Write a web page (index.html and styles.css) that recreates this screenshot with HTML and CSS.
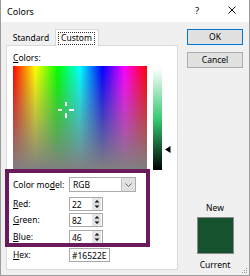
FILE: index.html
```html
<!DOCTYPE html>
<html>
<head>
<meta charset="utf-8">
<link rel="stylesheet" href="styles.css">
</head>
<body>
<div class="window">
  <div class="titlebar">
    <span class="title">Colors</span>
    <span class="help">?</span>
    <svg class="close" width="8" height="8" viewBox="0 0 8 8"><path d="M0.5 0.5 L7.5 7.5 M7.5 0.5 L0.5 7.5" stroke="#111" stroke-width="1"/></svg>
  </div>
  <div class="main">
    <div class="left">
      <div class="tabs">
        <div class="tab">Standard</div>
        <div class="tab active"><span class="focus">Custom</span></div>
      </div>
      <div class="panel">
        <div class="label top-label"><u>C</u>olors:</div>
        <div class="pickers">
          <div class="spectrum">
            <svg class="cross" width="17" height="17" viewBox="0 0 17 17">
              <rect x="0" y="7" width="4" height="2" fill="#fff"/>
              <rect x="11" y="7" width="5" height="2" fill="#fff"/>
              <rect x="7" y="0" width="2" height="4" fill="#fff"/>
              <rect x="7" y="11" width="2" height="5" fill="#fff"/>
            </svg>
          </div>
          <div class="lum"></div>
          <svg class="arrow" width="6" height="7" viewBox="0 0 6 7"><path d="M0 3.5 L5.5 0 L5.5 7 Z" fill="#000"/></svg>
        </div>
        <div class="form">
          <div class="label">Color mo<u>d</u>el:</div>
          <div class="select"><span class="val">RGB</span><span class="dd"><svg width="7" height="4" viewBox="0 0 7 4"><path d="M0.5 0.5 L3.5 3.5 L6.5 0.5" fill="none" stroke="#666" stroke-width="1"/></svg></span></div>
          <div class="label"><u>R</u>ed:</div>
          <div class="input spin"><span class="val">22</span><span class="spinbtn"><svg width="8" height="12" viewBox="0 0 8 12"><path d="M4 2 L6.5 4.5 L1.5 4.5 Z M4 10 L6.5 7.5 L1.5 7.5 Z" fill="#111"/><rect x="0" y="5.5" width="8" height="1" fill="#d0d0d0"/></svg></span></div>
          <div class="label"><u>G</u>reen:</div>
          <div class="input spin"><span class="val">82</span><span class="spinbtn"><svg width="8" height="12" viewBox="0 0 8 12"><path d="M4 2 L6.5 4.5 L1.5 4.5 Z M4 10 L6.5 7.5 L1.5 7.5 Z" fill="#111"/><rect x="0" y="5.5" width="8" height="1" fill="#d0d0d0"/></svg></span></div>
          <div class="label"><u>B</u>lue:</div>
          <div class="input spin"><span class="val">46</span><span class="spinbtn"><svg width="8" height="12" viewBox="0 0 8 12"><path d="M4 2 L6.5 4.5 L1.5 4.5 Z M4 10 L6.5 7.5 L1.5 7.5 Z" fill="#111"/><rect x="0" y="5.5" width="8" height="1" fill="#d0d0d0"/></svg></span></div>
          <div class="label"><u>H</u>ex:</div>
          <div class="input hex"><span class="val">#16522E</span></div>
        </div>
        <div class="highlight"></div>
      </div>
    </div>
    <div class="right">
      <div class="btn ok">OK</div>
      <div class="btn">Cancel</div>
      <div class="caption new">New</div>
      <div class="swatch"></div>
      <div class="caption current">Current</div>
    </div>
  </div>
  <svg class="grip" width="6" height="6" viewBox="0 0 6 6">
    <rect x="4" y="0" width="1" height="1" fill="#9a9a9a"/>
    <rect x="2" y="2" width="1" height="1" fill="#9a9a9a"/>
    <rect x="4" y="2" width="1" height="1" fill="#9a9a9a"/>
    <rect x="0" y="4" width="1" height="1" fill="#9a9a9a"/>
    <rect x="2" y="4" width="1" height="1" fill="#9a9a9a"/>
    <rect x="4" y="4" width="1" height="1" fill="#9a9a9a"/>
  </svg>
</div>
</body>
</html>
```

FILE: styles.css
```css
html, body {
  margin: 0;
  padding: 0;
  background: #f0f0f0;
}
body {
  font-family: "Noto Sans", "Open Sans", sans-serif;
  font-size: 8.5px;
  color: #000;
}
.window {
  position: relative;
  width: 250px;
  height: 276px;
  box-sizing: border-box;
  border-left: 1px solid #9c9c9c;
  border-right: 1px solid #9c9c9c;
  border-bottom: 1px solid #9c9c9c;
  background: #f0f0f0;
  display: flex;
  flex-direction: column;
}
.titlebar {
  height: 22px;
  flex: none;
  background: #fff;
  display: flex;
  align-items: center;
  padding: 0 13px 0 6px;
}
.title {
  flex: 1;
  font-size: 9px;
}
.help {
  width: 10px;
  text-align: center;
  font-size: 9.5px;
  margin-top: -1px;
}
.close {
  margin-left: 26px;
  margin-top: -2px;
}
.main {
  flex: 1;
  display: flex;
  padding: 7px 0 5px 5px;
}
.left {
  width: 172px;
  display: flex;
  flex-direction: column;
}
.tabs {
  height: 16px;
  display: flex;
  align-items: flex-end;
  position: relative;
  z-index: 1;
}
.tab {
  height: 14px;
  line-height: 13px;
  width: 48px;
  margin-left: 1px;
  text-align: center;
  box-sizing: border-box;
}
.tab.active {
  margin-left: 0;
  width: 44px;
  height: 17px;
  margin-bottom: -1px;
  background: #fff;
  border: 1px solid #d9d9d9;
  border-bottom: none;
  padding: 2px 3px 0 2px;
}
.focus {
  display: block;
  border: 1px dotted #333;
  height: 11px;
  line-height: 10px;
  text-align: center;
}
.panel {
  position: relative;
  height: 225px;
  box-sizing: border-box;
  background: #fff;
  border: 1px solid #d9d9d9;
  padding: 7px 0 0 6px;
}
.label {
  line-height: 10px;
  white-space: nowrap;
}
.top-label {
  margin-bottom: 3px;
}
.pickers {
  display: flex;
  align-items: flex-start;
}
.spectrum {
  position: relative;
  width: 134px;
  height: 103px;
  background:
    linear-gradient(to bottom, rgba(128,128,128,0), #808080),
    linear-gradient(to right, #f00, #ff0, #0f0, #0ff, #00f, #f0f, #f00);
}
.cross {
  position: absolute;
  left: 45px;
  top: 36px;
}
.lum {
  width: 9px;
  height: 102px;
  margin: 2px 0 0 6px;
  background: linear-gradient(to bottom, #fff, hsl(144, 58%, 50%), #000);
}
.arrow {
  margin: 80px 0 0 3px;
}
.form {
  margin-top: 7px;
  display: grid;
  grid-template-columns: 56px auto;
  grid-template-rows: 20px 16px 17px 18px 14px;
  justify-items: start;
  align-items: start;
}
.form .label {
  height: 14px;
  line-height: 14px;
}
.form .label:first-child {
  height: 15px;
  line-height: 15px;
}
.select {
  width: 67px;
  height: 15px;
  box-sizing: border-box;
  border: 1px solid #adadad;
  background: #fff;
  display: flex;
}
.select .val {
  flex: 1;
  padding-left: 3px;
  line-height: 13px;
}
.dd {
  width: 13px;
  background: #e1e1e1;
  border-left: 1px solid #c4c4c4;
  display: flex;
  align-items: center;
  justify-content: center;
}
.input {
  height: 14px;
  box-sizing: border-box;
  border: 1px solid #a9a9a9;
  background: #fff;
  display: flex;
}
.input .val {
  flex: 1;
  padding-left: 2px;
  line-height: 13px;
}
.spin {
  width: 34px;
}
.spinbtn {
  width: 9px;
  margin: 0 1px 0 0;
  background: #e6e6e6;
  display: flex;
  align-items: center;
  justify-content: center;
}
.hex {
  width: 41px;
}
.highlight {
  position: absolute;
  left: -2px;
  top: 123px;
  width: 145px;
  height: 78px;
  box-sizing: border-box;
  border: 4px solid #6a1b5e;
}
.right {
  width: 56px;
  margin-left: 9px;
  display: flex;
  flex-direction: column;
  align-items: center;
}
.btn {
  width: 56px;
  height: 16px;
  box-sizing: border-box;
  border: 1px solid #adadad;
  background: #e1e1e1;
  text-align: center;
  line-height: 14px;
}
.btn.ok {
  border-color: #0078d7;
  margin-bottom: 7px;
}
.caption {
  line-height: 10px;
}
.new {
  margin-top: auto;
}
.swatch {
  width: 37px;
  height: 37px;
  box-sizing: border-box;
  margin-top: 4px;
  background: #16522e;
  border: 1px solid #8a8a8a;
}
.current {
  margin-top: 6px;
}
.grip {
  position: absolute;
  right: 1px;
  bottom: 1px;
}
```
